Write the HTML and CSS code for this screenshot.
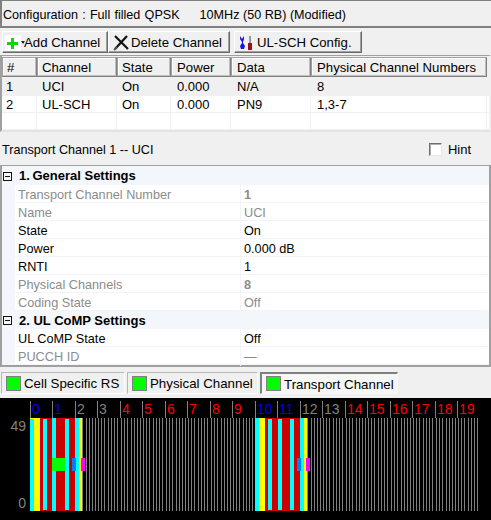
FILE: index.html
```html
<!DOCTYPE html>
<html>
<head>
<meta charset="utf-8">
<title>Transport Channel</title>
<link rel="stylesheet" href="styles.css">
</head>
<body>
<div class="app">
  <div class="config"><span class="cfg-a">Configuration : Full filled QPSK</span><span class="cfg-b">10MHz (50 RB) (Modified)</span></div>
  <div class="toolbar">
    <button class="btn btn-add">
      <span class="ico-add"><svg width="16" height="16" viewBox="0 0 16 16"><path d="M6 3h3v4h4v3H9v4H6v-4H2V7h4z" fill="#0cd60c"/></svg><i class="caret"></i></span>Add Channel
    </button>
    <button class="btn btn-del">
      <svg width="16" height="16" viewBox="0 0 16 16"><path d="M2 1l13 13M14 1L2 14" stroke="#111" stroke-width="2.2" fill="none"/><path d="M1 15l3-3" stroke="#555" stroke-width="2"/></svg>Delete Channel
    </button>
    <button class="btn btn-cfg">
      <svg width="16" height="16" viewBox="0 0 16 16"><path d="M1 1l2 3 2-3v3l-1 3v1l2 3-1 3H2l-1-3 2-3V7L1 4z" fill="#1414e6"/><rect x="10" y="1" width="2" height="7" fill="#999"/><rect x="9" y="8" width="4" height="7" fill="#a01010"/></svg>UL-SCH Config.
    </button>
  </div>
  <div class="table">
    <div class="tr th">
      <div>#</div><div>Channel</div><div>State</div><div>Power</div><div>Data</div><div>Physical Channel Numbers</div>
    </div>
    <div class="tr td sel">
      <div>1</div><div>UCI</div><div>On</div><div>0.000</div><div>N/A</div><div>8</div>
    </div>
    <div class="tr td">
      <div>2</div><div>UL-SCH</div><div>On</div><div>0.000</div><div>PN9</div><div>1,3-7</div>
    </div>
    <div class="tr td">
      <div></div><div></div><div></div><div></div><div></div><div></div>
    </div>
  </div>
  <div class="caption">
    <span>Transport Channel 1 -- UCI</span>
    <label class="hint"><i class="check"></i>Hint</label>
  </div>
  <div class="grid">
    <div class="group first"><i class="toggle"></i>1.&#8201;General Settings</div>
    <div class="row off"><div>Transport Channel Number</div><div class="strong">1</div></div>
    <div class="row off"><div>Name</div><div>UCI</div></div>
    <div class="row"><div>State</div><div>On</div></div>
    <div class="row"><div>Power</div><div>0.000 dB</div></div>
    <div class="row"><div>RNTI</div><div>1</div></div>
    <div class="row off"><div>Physical Channels</div><div class="strong">8</div></div>
    <div class="row off"><div>Coding State</div><div>Off</div></div>
    <div class="group"><i class="toggle"></i>2. UL CoMP Settings</div>
    <div class="row"><div>UL CoMP State</div><div>Off</div></div>
    <div class="row off"><div>PUCCH ID</div><div>—</div></div>
  </div>
  <div class="tabs">
    <div class="tab t1"><i class="swatch"></i>Cell Specific RS</div>
    <div class="tab t2"><i class="swatch"></i>Physical Channel</div>
    <div class="tab t3"><i class="swatch"></i>Transport Channel</div>
  </div>
  <svg id="chart" class="chart" width="491" height="122" viewBox="0 398 491 122"></svg>
</div>
<script src="script.js"></script>
</body>
</html>
```

FILE: styles.css
```css
* { box-sizing: border-box; }
html, body { margin: 0; padding: 0; background: #f0f0f0; }
body { width: 491px; height: 520px; overflow: hidden; font-family: "Liberation Sans", Arial, sans-serif; font-size: 13px; color: #000; }
.app { display: flex; flex-direction: column; width: 491px; height: 520px; }

.config { height: 28px; font-size: 12.6px; border-top: 1px solid #808080; border-left: 2px solid #808080; border-bottom: 2px solid #808080; padding: 6px 0 0 1px; line-height: 17px; display: flex; }
.cfg-a { word-spacing: 0.75px; }
.cfg-b { margin-left: 20px; }

.toolbar { height: 27px; padding: 3px 0 0 2px; display: flex; }
.btn { height: 22px; padding: 1px 0 0; margin: 0; display: flex; align-items: center; font: inherit; font-size: 13.2px; color: #000; background: #f0f0f0; border: 1px solid; border-color: #fff #696969 #696969 #fff; box-shadow: inset -1px -1px 0 #a0a0a0; white-space: nowrap; }
.btn-add { width: 106px; padding-left: 2px; }
.btn-del { width: 122px; padding-left: 4px; gap: 2px; }
.btn-cfg { width: 128px; margin-left: 4px; padding-left: 4px; gap: 2px; }
.ico-add { width: 16px; height: 16px; background: #fff; display: block; position: relative; margin-right: 3px; }
.ico-add svg { display: block; }
.caret { position: absolute; right: -4px; top: 6px; border: 2px solid transparent; border-top: 3px solid #222; border-bottom: 0; }

.table { height: 77px; background: #fff; border-top: 1px solid #a0a0a0; border-left: 2px solid #a0a0a0; border-right: 2px solid #f0f0f0; border-bottom: 2px solid #e3e3e3; }
.tr { display: grid; grid-template-columns: 35px 80px 54px 60px 80px 176px; }
.th { height: 21px; padding-top: 1px; background: #f0f0f0; font-size: 13.2px; }
.th div { border: 1px solid; border-color: #a0a0a0 #808080 #808080 #a0a0a0; box-shadow: inset -1px -1px 0 #c0c0c0, inset 1px 1px 0 #fff; padding: 2px 0 0 4px; line-height: 16px; white-space: nowrap; overflow: hidden; }
.th div:nth-child(n+4) { padding-left: 5px; }
.td { height: 17px; line-height: 17px; border-bottom: 1px solid #f0f0f0; }
.td div { padding-left: 5px; border-right: 1px solid #f0f0f0; white-space: nowrap; }
.td div:first-child { padding-left: 4px; }
.td div:nth-child(n+4) { padding-left: 6px; }
.sel { height: 19px; line-height: 20px; background: #f0f0f0; }

.caption { height: 33px; font-size: 12.6px; padding: 10px 20px 0 2px; line-height: 17px; display: flex; justify-content: space-between; }
.hint { display: flex; align-items: center; height: 17px; font-size: 13px; margin-top: -1px; }
.check { width: 13px; height: 13px; margin-right: 6px; background: #fff; border: 1px solid #6d6d6d; border-right-color: #e8e8e8; border-bottom-color: #e8e8e8; box-shadow: inset 1px 1px 0 #b0b0b0; }

.grid { height: 202px; background: #fff; border: 2px solid #a0a0a0; border-width: 1px 2px 2px 2px; display: flex; flex-direction: column; font-size: 12.7px; }
.group { height: 18px; flex: none; background: #f3f6fb; font-weight: bold; font-size: 13px; line-height: 18px; display: flex; align-items: center; padding: 1px 0 0 1px; }
.first { height: 19px; }
.toggle { width: 9px; height: 9px; margin-right: 7px; border: 1px solid #111; background: linear-gradient(#111,#111) center/5px 1px no-repeat; }
.row { height: 18px; flex: none; display: grid; grid-template-columns: 226px 1fr; margin-left: 13px; line-height: 17px; border-bottom: 1px solid #f3f3fb; box-shadow: -13px 0 0 #f3f6fb; }
.row div { padding: 2px 0 0 3px; white-space: nowrap; }
.row div:first-child { border-right: 1px solid #f3f3fb; }
.off { color: #8c8c8c; }
.strong { font-weight: bold; }

.tabs { height: 31px; padding: 5px 0 0 1px; display: flex; gap: 2px; font-size: 13.3px; }
.tab { height: 22px; display: flex; align-items: center; gap: 3px; padding: 1px 0 0 4px; border: 1px solid; border-color: #b8b8b8 #fff #fff #b8b8b8; white-space: nowrap; background: #f0f0f0; }
.t1 { width: 124px; }
.t2 { width: 131px; }
.t3 { width: 138px; border-color: #808080 #f8f8f8 #f8f8f8 #808080; border-width: 2px 1px 1px 2px; background: #f6f6f6; }
.swatch { width: 15px; height: 15px; flex: none; background: #00ff00; border: 1px solid #808080; margin-top: -1px; }

.chart { display: block; background: #000; flex: none; }
.lbl { font-family: "Liberation Sans", Arial, sans-serif; font-size: 14px; }
```

FILE: script.js
```js
var svg = document.getElementById('chart');
var NS = 'http://www.w3.org/2000/svg';
function rect(x, y, w, h, fill) {
  var r = document.createElementNS(NS, 'rect');
  r.setAttribute('x', x); r.setAttribute('y', y);
  r.setAttribute('width', w); r.setAttribute('height', h);
  r.setAttribute('fill', fill);
  svg.appendChild(r);
}
function text(x, y, s, fill, anchor) {
  var t = document.createElementNS(NS, 'text');
  t.setAttribute('x', x); t.setAttribute('y', y);
  t.setAttribute('fill', fill); t.setAttribute('class', 'lbl');
  if (anchor) t.setAttribute('text-anchor', anchor);
  t.textContent = s;
  svg.appendChild(t);
}
var GRAY = '#808080', BLUE = '#0000e0', RED = '#ff0000';
var ticks = [30,52,75,97,120,142,165,187,210,232,255,277,300,322,345,367,390,412,435,457];
ticks.forEach(function (t, i) {
  rect(t, 401, 1, 17, GRAY);
  var c = (i === 0 || i === 1 || i === 10 || i === 11) ? BLUE : (i === 2 || i === 3 || i === 12 || i === 13) ? GRAY : RED;
  text(t + 2, 414, String(i), c);
  for (var k = 0; k < 7; k++) rect(Math.round(t + 1 + k * 3.21), 418, 1, 93, GRAY);
});
text(26, 431, '49', GRAY, 'end');
text(26, 508, '0', GRAY, 'end');

var C = '#00ffff', Y = '#ffff00', R = '#cc0000';
[
  [30,34,C],[34,40,Y],[40,52,R],[52,56,C],[56,75,R],[75,79,C],[79,82,Y],
  [255,259,C],[259,265,Y],[265,300,R],[300,304,C],[304,307,Y]
].forEach(function (b) { rect(b[0], 418, b[1] - b[0], 93, b[2]); });
[[43,47],[65,69],[268,272],[278,282],[290,294]].forEach(function (b) { rect(b[0], 419, b[1] - b[0], 91, C); });
rect(30, 418, 4, 1, Y);
rect(52, 458, 13, 13, '#00ff00');
[[72,76],[297,301]].forEach(function (b) { rect(b[0], 458, 4, 13, '#0080ff'); });
[[81,85],[306,310]].forEach(function (b) { rect(b[0], 458, 4, 13, '#ff00ff'); });
```
